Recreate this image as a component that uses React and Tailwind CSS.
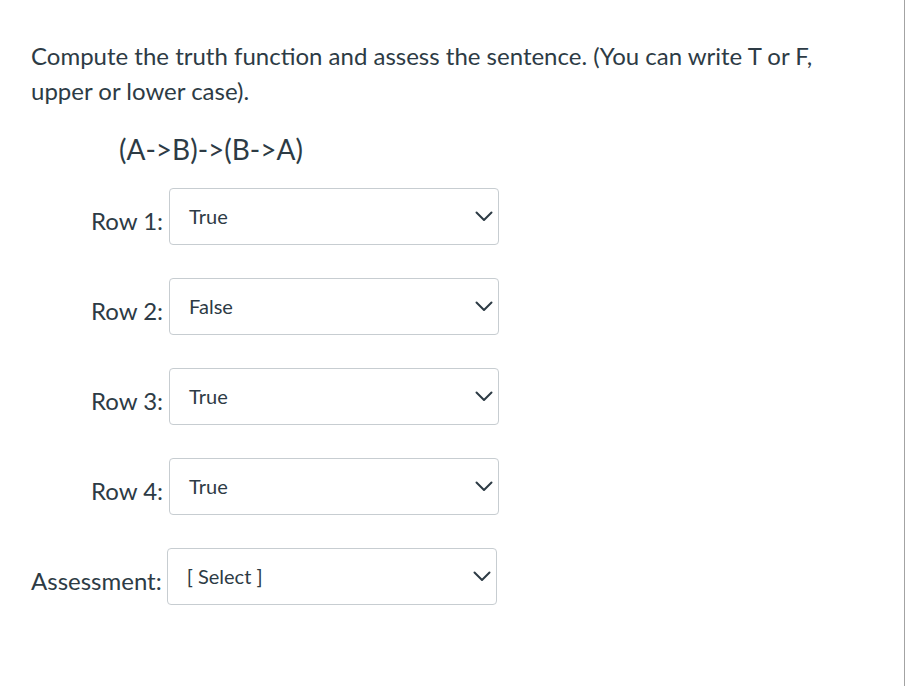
import React from "react";

function Chevron() {
  return (
    <svg width="18" height="11" viewBox="0 0 18 11" fill="none">
      <path d="M1.5 1.5 L9 9 L16.5 1.5" stroke="#2d3b45" strokeWidth="2" strokeLinecap="round" strokeLinejoin="round" />
    </svg>
  );
}

function Select({ value }) {
  return (
    <div className="w-[330px] h-[57px] border border-[#c7cdd1] rounded-[4px] bg-white flex items-center justify-between pl-[19px] pr-[5px]">
      <span className="text-[20px] leading-none -mt-[2px] text-[#2d3b45]">{value}</span>
      <div className="-mt-[1px]"><Chevron /></div>
    </div>
  );
}

function Row({ label, value, indent = "pl-[91px]", gap = "ml-[6px]" }) {
  return (
    <div className={`flex items-center ${indent}`}>
      <span className="text-[24px] leading-none mt-[8px] text-[#2d3b45] whitespace-nowrap">{label}</span>
      <div className={gap}><Select value={value} /></div>
    </div>
  );
}

export default function App() {
  return (
    <div className="w-[905px] h-[686px] border-r border-[#a3a3a3] bg-white" style={{ fontFamily: "Lato, 'Noto Sans', sans-serif" }}>
      <div className="pt-[38px] pl-[31px] text-[#2d3b45]">
        <p className="text-[24px] leading-[35px]">
          Compute the truth function and assess the sentence. (You can write T or F,<br />upper or lower case).
        </p>
        <p className="text-[28px] leading-none pl-[88px] mt-[27px]">(A-&gt;B)-&gt;(B-&gt;A)</p>
      </div>
      <div className="mt-[25px] flex flex-col gap-[33px]">
        <Row label="Row 1:" value="True" />
        <Row label="Row 2:" value="False" />
        <Row label="Row 3:" value="True" />
        <Row label="Row 4:" value="True" />
        <Row label="Assessment:" value="[ Select ]" indent="pl-[31px]" gap="ml-[5px]" />
      </div>
    </div>
  );
}
